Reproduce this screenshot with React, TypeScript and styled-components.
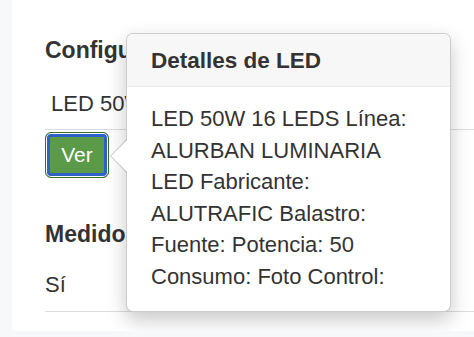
import styled, { createGlobalStyle } from "styled-components";

const GlobalStyle = createGlobalStyle`
  html, body {
    margin: 0;
    padding: 0;
    background: #f7f8fa;
  }
  body {
    font-family: "Liberation Sans", Arial, sans-serif;
    color: #333;
  }
`;

const detailLines = [
  "LED 50W 16 LEDS Línea:",
  "ALURBAN LUMINARIA",
  "LED Fabricante:",
  "ALUTRAFIC Balastro:",
  "Fuente: Potencia: 50",
  "Consumo: Foto Control:",
];

const App = () => (
  <>
    <GlobalStyle />
    <Main>
      <Section>
        <Heading>Configuración</Heading>
        <Row $indent={6}>LED 50W 16 LEDS</Row>
        <ButtonWrap>
          <ViewButton>Ver</ViewButton>
          <Popover>
            <Arrow />
            <PopoverTitle>Detalles de LED</PopoverTitle>
            <PopoverBody>
              {detailLines.map((line) => (
                <Line key={line}>{line}</Line>
              ))}
            </PopoverBody>
          </Popover>
        </ButtonWrap>
      </Section>
      <Section $gap={43}>
        <Heading>Medidor</Heading>
        <Row $last>Sí</Row>
      </Section>
    </Main>
  </>
);

export default App;

const Main = styled.div`
  margin-left: 12px;
  height: 331px;
  box-sizing: border-box;
  padding: 37px 0 0 33px;
  background: #fff;
  overflow: hidden;
`;

const Section = styled.div<{ $gap?: number }>`
  display: flex;
  flex-direction: column;
  margin-top: ${(p) => p.$gap ?? 0}px;
`;

const Heading = styled.h3`
  margin: 0 0 26px;
  font-size: 23px;
  line-height: 26px;
  font-weight: 700;
  color: #333;
`;

const Row = styled.div<{ $last?: boolean; $indent?: number }>`
  padding: 0 0 ${(p) => (p.$last ? 11 : 10)}px ${(p) => p.$indent ?? 0}px;
  margin-top: ${(p) => (p.$last ? -3 : 0)}px;
  font-size: 22px;
  line-height: 30px;
  border-bottom: 1px solid #dcdcdc;
`;

const ButtonWrap = styled.div`
  position: relative;
  align-self: flex-start;
  margin-top: 2px;
`;

const ViewButton = styled.button`
  display: block;
  width: 64px;
  height: 46px;
  padding: 0;
  border: 1px solid #3c6d2e;
  border-radius: 6px;
  background: #5b9a48;
  box-shadow: inset 0 0 0 1px #fff, inset 0 0 0 4px #2f62c6;
  color: #fff;
  font-family: "Liberation Sans", Arial, sans-serif;
  font-size: 21px;
  cursor: pointer;
`;

const Popover = styled.div`
  position: absolute;
  left: 81px;
  top: -99px;
  width: 325px;
  height: 279px;
  box-sizing: border-box;
  background: #fff;
  border: 1px solid rgba(0, 0, 0, 0.2);
  border-radius: 7px;
  box-shadow: 0 8px 20px rgba(0, 0, 0, 0.22);
  z-index: 10;
`;

const Arrow = styled.div`
  position: absolute;
  left: -17px;
  top: 105px;
  width: 0;
  height: 0;
  border-style: solid;
  border-width: 17px 17px 17px 0;
  border-color: transparent rgba(0, 0, 0, 0.25) transparent transparent;

  &::after {
    content: "";
    position: absolute;
    left: 1px;
    top: -16px;
    border-style: solid;
    border-width: 16px 16px 16px 0;
    border-color: transparent #fff transparent transparent;
  }
`;

const PopoverTitle = styled.div`
  padding: 14px 24px 13px;
  background: #f7f7f7;
  border-bottom: 1px solid #ebebeb;
  border-radius: 6px 6px 0 0;
  font-size: 22.5px;
  line-height: 25px;
  font-weight: 700;
`;

const PopoverBody = styled.div`
  padding: 16px 24px 18px;
  font-size: 22px;
  line-height: 31.5px;
`;

const Line = styled.div`
  white-space: nowrap;
`;
